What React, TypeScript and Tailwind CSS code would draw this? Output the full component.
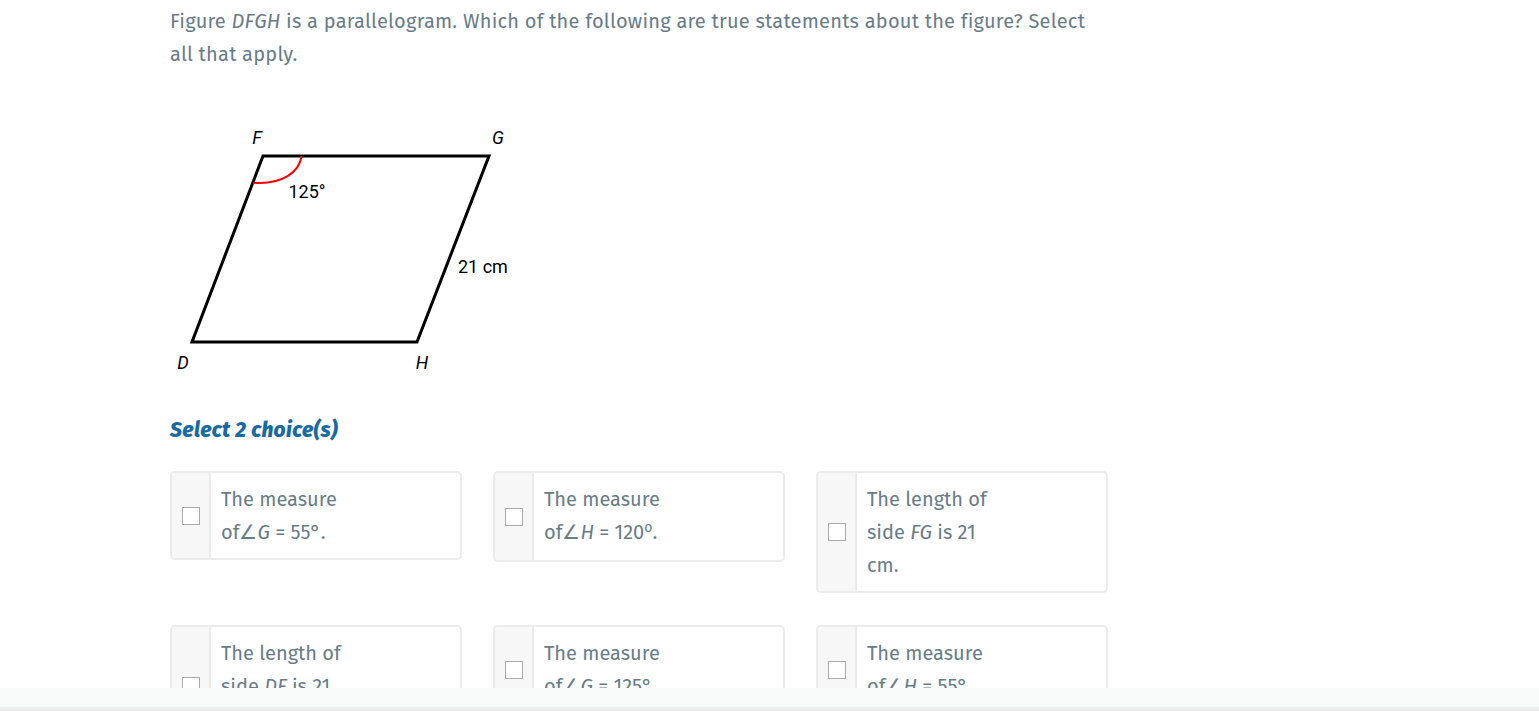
import React from "react"

const textFont = { fontFamily: '"Fira Sans", Lato, "Noto Sans", sans-serif' }

type Choice = { lines: React.ReactNode[] }

const Deg = () => <span className="relative -top-[7px] text-[14px]">o</span>

const choices: Choice[] = [
  { lines: ["The measure", <>of∠<i>G</i> = 55°.</>] },
  { lines: ["The measure", <>of∠<i>H</i> = 120<Deg />.</>] },
  { lines: ["The length of", <>side <i>FG</i> is 21</>, "cm."] },
  { lines: ["The length of", <>side <i>DF</i> is 21</>, "cm."] },
  { lines: ["The measure", <>of∠<i>G</i> = 125°.</>] },
  { lines: ["The measure", <>of∠<i>H</i> = 55°.</>] },
]

const ChoiceCard = ({ lines }: Choice) => {
  return (
    <div className="flex rounded-[5px] border-2 border-[#ececec] bg-white overflow-hidden">
      <div className="w-[39px] shrink-0 bg-[#f7f7f7] border-r-2 border-[#ececec] flex items-center justify-center">
        <span className="block w-[18px] h-[18px] border border-[#aaaaaa] bg-white" />
      </div>
      <div className="pl-[10px] pt-[10px] pb-[9px] text-[20px] leading-[33px] text-[#687c88]">
        {lines.map((line, i) => (
          <div key={i}>{line}</div>
        ))}
      </div>
    </div>
  )
}

const Figure = () => {
  return (
    <svg width="370" height="260" viewBox="0 0 370 260" className="block">
      <polygon
        points="93,36 319,36 247,222 22,222"
        fill="none"
        stroke="#000"
        strokeWidth="3"
        strokeLinejoin="miter"
      />
      <path d="M131.7 36 C129 52, 113 65, 83 62.7" fill="none" stroke="#ff0000" strokeWidth="2" />
      <g fontFamily="Roboto, sans-serif" fill="#000">
        <text x="87" y="24" fontSize="18" fontStyle="italic" textAnchor="middle">F</text>
        <text x="328" y="24" fontSize="18" fontStyle="italic" textAnchor="middle">G</text>
        <text x="13" y="249" fontSize="18" fontStyle="italic" textAnchor="middle">D</text>
        <text x="252" y="249" fontSize="18" fontStyle="italic" textAnchor="middle">H</text>
        <text x="137" y="78" fontSize="18" textAnchor="middle">125°</text>
        <text x="288" y="153" fontSize="18">21 cm</text>
      </g>
    </svg>
  )
}

export default function App() {
  return (
    <div className="w-[1539px] h-[711px] bg-white overflow-hidden flex flex-col" style={textFont}>
      <div className="h-[688px] overflow-hidden pl-[170px]">
        <p className="pt-[5px] text-[20px] leading-[33px] tracking-[0.23px] text-[#687c88]">
          Figure <i>DFGH</i> is a parallelogram. Which of the following are true statements about the figure? Select
          <br />
          all that apply.
        </p>
        <div className="mt-[49px]">
          <Figure />
        </div>
        <h2 className="mt-[36px] text-[21px] leading-[28px] tracking-[0.35px] font-extrabold italic text-[#176aa3]">
          Select 2 choice(s)
        </h2>
        <div className="mt-[27px] grid grid-cols-[292px_292px_292px] gap-x-[31px] gap-y-[32px] items-start">
          {choices.map((c, i) => (
            <ChoiceCard key={i} lines={c.lines} />
          ))}
        </div>
      </div>
      <div className="h-[19px] bg-[#f8fafa]" />
      <div className="h-[4px] bg-[#ececec]" />
    </div>
  )
}
